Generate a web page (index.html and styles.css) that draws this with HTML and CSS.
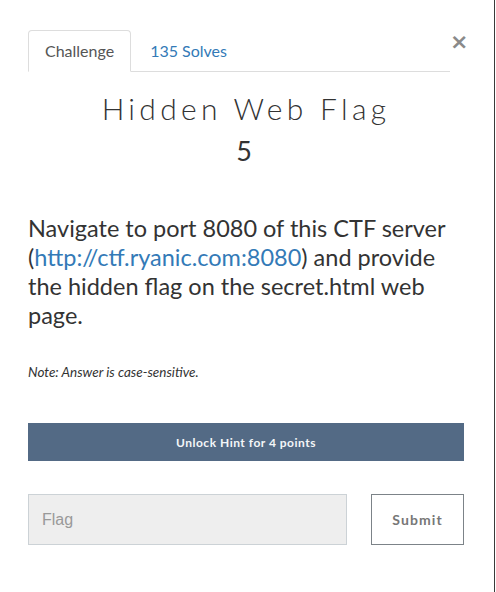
FILE: index.html
```html
<!DOCTYPE html>
<html>
<head>
<meta charset="utf-8">
<link rel="stylesheet" href="styles.css">
</head>
<body>
<div class="modal">
  <div class="header">
    <ul class="tabs">
      <li class="tab active">Challenge</li>
      <li class="tab"><a href="#">135 Solves</a></li>
    </ul>
    <span class="close">&times;</span>
  </div>
  <h2 class="title">Hidden Web Flag</h2>
  <h3 class="value">5</h3>
  <div class="desc">
    <p>Navigate to port 8080 of this CTF server (<a href="#">http://ctf.ryanic.com:8080</a>) and provide the hidden flag on the secret.html web page.</p>
    <p class="note">Note: Answer is case-sensitive.</p>
  </div>
  <button class="hint">Unlock Hint for 4 points</button>
  <div class="answer">
    <input class="flag" type="text" placeholder="Flag">
    <button class="submit">Submit</button>
  </div>
</div>
</body>
</html>
```
FILE: styles.css
```css
* { box-sizing: border-box; }
html, body { margin: 0; padding: 0; background: #fff; }
body { font-family: Lato, "Open Sans", sans-serif; color: #333; }
.modal {
  width: 495px;
  height: 592px;
  border-right: 1px solid #3a3a3a;
  padding: 30px 30px 0 28px;
}
.header { display: flex; align-items: flex-start; }
.tabs {
  flex: 1;
  display: flex;
  list-style: none;
  margin: 0;
  padding: 0;
  border-bottom: 1px solid #ddd;
}
.tab {
  font-size: 16px;
  line-height: 20px;
  padding: 10px 16px;
  border: 1px solid transparent;
  border-radius: 4px 4px 0 0;
  margin-bottom: -1px;
  margin-right: 2px;
  color: #555;
}
.tab.active { border-color: #ddd #ddd transparent; background: #fff; }
.tab a { color: #337ab7; text-decoration: none; }
.close {
  font-size: 22px;
  font-weight: 700;
  line-height: 1;
  color: #8a8a8a;
  margin-left: 0;
  margin-right: 1px;
  margin-top: 1px;
  width: 13px;
  font-family: "DejaVu Sans", sans-serif;
}
.title {
  margin: 19px 0 0;
  text-align: center;
  font-weight: 300;
  font-size: 30px;
  line-height: 34px;
  letter-spacing: 4.3px;
  color: #333;
}
.value {
  margin: 9px 0 0;
  text-align: center;
  font-weight: 400;
  font-size: 27px;
  line-height: 34px;
  padding-right: 4px;
}
.desc { margin-top: 46px; }
.desc p {
  margin: 0;
  font-size: 23.5px;
  line-height: 29px;
}
.desc a { color: #337ab7; text-decoration: none; }
.desc .note {
  margin-top: 33px;
  font-size: 13.5px;
  line-height: 18px;
  font-style: italic;
}
.hint {
  display: block;
  width: 100%;
  margin-top: 42px;
  height: 38px;
  border: none;
  background: #536a85;
  color: #f4f6f8;
  font-family: Lato, sans-serif;
  font-weight: 700;
  font-size: 12px;
  letter-spacing: 0.5px;
}
.answer {
  display: flex;
  justify-content: space-between;
  margin-top: 33px;
}
.flag {
  width: 319px;
  height: 51px;
  background: #eee;
  border: 1px solid #ccd2d6;
  padding: 0 13px;
  font-family: "Liberation Sans", Arial, sans-serif;
  font-size: 16px;
  color: #555;
  outline: none;
}
.flag::placeholder { color: #999; }
.submit {
  width: 93px;
  height: 51px;
  background: #fff;
  border: 1px solid #7c8388;
  color: #777;
  font-family: Lato, sans-serif;
  font-weight: 700;
  font-size: 14px;
  letter-spacing: 1.1px;
}
```
